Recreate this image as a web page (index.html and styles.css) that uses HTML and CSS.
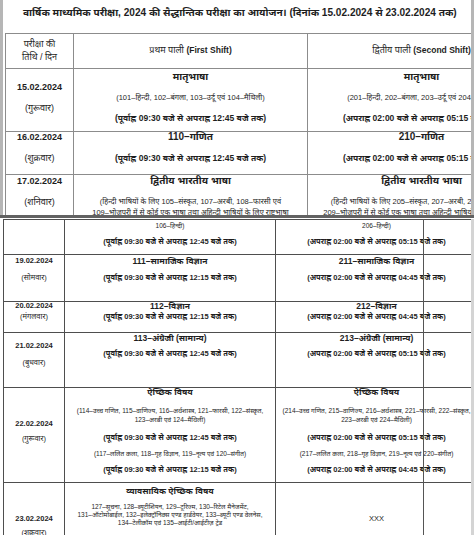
FILE: index.html
```html
<!DOCTYPE html>
<html lang="hi">
<head>
<meta charset="utf-8">
<link rel="stylesheet" href="styles.css">
</head>
<body>
<div class="top">
  <div class="strip"></div>
  <div class="top-main">
    <div class="title">वार्षिक माध्यमिक परीक्षा, 2024 की सैद्धान्तिक परीक्षा का आयोजन। (दिनांक 15.02.2024 से 23.02.2024 तक)</div>
    <table class="t1">
      <colgroup><col class="c1"><col class="c2"><col class="c3"></colgroup>
      <tr class="h-head">
        <td class="head1"><div>परीक्षा की</div><div>तिथि / दिन</div></td>
        <td class="head2">प्रथम पाली <span class="lat">(First Shift)</span></td>
        <td class="head2">द्वितीय पाली <span class="lat">(Second Shift)</span></td>
      </tr>
      <tr class="h-r15">
        <td class="date-cell r15d"><div class="date l20">15.02.2024</div><div class="day l22">(गुरूवार)</div></td>
        <td><div class="subj l16">मातृभाषा</div><div class="list l26">(101–हिन्दी, 102–बंगला, 103–उर्दू एवं 104–मैथिली)</div><div class="time l14">(पूर्वाह्न 09:30 बजे से अपराह्न 12:45 बजे तक)</div></td>
        <td><div class="subj l16">मातृभाषा</div><div class="list l26">(201–हिन्दी, 202–बंगला, 203–उर्दू एवं 204–मैथिली)</div><div class="time l14">(अपराह्न 02:00 बजे से अपराह्न 05:15 बजे तक)</div></td>
      </tr>
      <tr class="h-r16">
        <td class="date-cell"><div class="date l10">16.02.2024</div><div class="day l32">(शुक्रवार)</div></td>
        <td><div class="subj l10">110–गणित</div><div class="time l32">(पूर्वाह्न 09:30 बजे से अपराह्न 12:45 बजे तक)</div></td>
        <td><div class="subj l10">210–गणित</div><div class="time l32">(अपराह्न 02:00 बजे से अपराह्न 05:15 बजे तक)</div></td>
      </tr>
      <tr class="h-r17">
        <td class="date-cell"><div class="date l12">17.02.2024</div><div class="day l30">(शनिवार)</div></td>
        <td><div class="subj l12">द्वितीय भारतीय भाषा</div><div class="list para">(हिन्दी भाषियों के लिए 105–संस्कृत, 107–अरबी, 108–फारसी एवं<br>109–भोजपुरी में से कोई एक भाषा तथा अहिन्दी भाषियों के लिए राष्ट्रभाषा</div></td>
        <td><div class="subj l12">द्वितीय भारतीय भाषा</div><div class="list para">(हिन्दी भाषियों के लिए 205–संस्कृत, 207–अरबी, 208–फारसी एवं<br>209–भोजपुरी में से कोई एक भाषा तथा अहिन्दी भाषियों के लिए राष्ट्रभाषा</div></td>
      </tr>
    </table>
  </div>
  <div class="strip"></div>
</div>
<div class="band"></div>
<div class="bottom">
  <div class="gap"></div>
  <div class="bottom-main">
    <table class="t2">
      <colgroup><col class="d1"><col class="d2"><col class="d3"></colgroup>
      <tr class="b-r0">
        <td></td>
        <td><div class="list2 l12">106–हिन्दी)</div><div class="time2 l20">(पूर्वाह्न 09:30 बजे से अपराह्न 12:45 बजे तक)</div></td>
        <td><div class="list2 l12">206–हिन्दी)</div><div class="time2 l20">(अपराह्न 02:00 बजे से अपराह्न 05:15 बजे तक)</div></td>
      </tr>
      <tr class="b-r19">
        <td><div class="date2 l12">19.02.2024</div><div class="day2 l22">(सोमवार)</div></td>
        <td><div class="subj2 l12">111–सामाजिक विज्ञान</div><div class="time2 l22">(पूर्वाह्न 09:30 बजे से अपराह्न 12:15 बजे तक)</div></td>
        <td><div class="subj2 l12">211–सामाजिक विज्ञान</div><div class="time2 l22">(अपराह्न 02:00 बजे से अपराह्न 04:45 बजे तक)</div></td>
      </tr>
      <tr class="b-r20">
        <td><div class="date2 l8">20.02.2024</div><div class="day2 l14">(मंगलवार)</div></td>
        <td><div class="subj2 l8">112–विज्ञान</div><div class="time2 l14">(पूर्वाह्न 09:30 बजे से अपराह्न 12:15 बजे तक)</div></td>
        <td><div class="subj2 l8">212–विज्ञान</div><div class="time2 l14">(अपराह्न 02:00 बजे से अपराह्न 04:45 बजे तक)</div></td>
      </tr>
      <tr class="b-r21">
        <td class="pad5"><div class="date2 l16">21.02.2024</div><div class="day2 l18">(बुधवार)</div></td>
        <td><div class="subj2 l10">113–अंग्रेजी (सामान्य)</div><div class="time2 l22">(पूर्वाह्न 09:30 बजे से अपराह्न 12:45 बजे तक)</div></td>
        <td><div class="subj2 l10">213–अंग्रेजी (सामान्य)</div><div class="time2 l22">(अपराह्न 02:00 बजे से अपराह्न 05:15 बजे तक)</div></td>
      </tr>
      <tr class="b-r22">
        <td class="pad28"><div class="date2 l16">22.02.2024</div><div class="day2 l14">(गुरूवार)</div></td>
        <td><div class="subj2 l8">ऐच्छिक विषय</div><div class="list2 para2">(114–उच्च गणित, 115–वाणिज्य, 116–अर्थशास्त्र, 121–फारसी, 122–संस्कृत,<br>123–अरबी एवं 124–मैथिली)</div><div class="time2 l16 mt6">(पूर्वाह्न 09:30 बजे से अपराह्न 12:45 बजे तक)</div><div class="list2 l16">(117–ललित कला, 118–गृह विज्ञान, 119–नृत्य एवं 120–संगीत)</div><div class="time2 l16">(पूर्वाह्न 09:30 बजे से अपराह्न 12:15 बजे तक)</div></td>
        <td><div class="subj2 l8">ऐच्छिक विषय</div><div class="list2 para2">(214–उच्च गणित, 215–वाणिज्य, 216–अर्थशास्त्र, 221–फारसी, 222–संस्कृत,<br>223–अरबी एवं 224–मैथिली)</div><div class="time2 l16 mt6">(अपराह्न 02:00 बजे से अपराह्न 05:15 बजे तक)</div><div class="list2 l16">(217–ललित कला, 218–गृह विज्ञान, 219–नृत्य एवं 220–संगीत)</div><div class="time2 l16">(अपराह्न 02:00 बजे से अपराह्न 04:45 बजे तक)</div></td>
      </tr>
      <tr class="b-r23">
        <td class="pad29"><div class="date2 l14">23.02.2024</div><div class="day2 l14">(शुक्रवार)</div></td>
        <td><div class="subj2 l16">व्यावसायिक ऐच्छिक विषय</div><div class="list3 para3">127–सूचना, 128–ब्यूटीशियन, 129–टूरिज्म, 130–रिटेल मैनेजमेंट,<br>131–ऑटोमोबाईल, 132–इलेक्ट्रॉनिक्स एण्ड हार्डवेयर, 133–ब्यूटी एण्ड वेलनेस,<br>134–टेलीकॉम एवं 135–आईटी/आईटीज़ ट्रेड</div></td>
        <td class="pad29"><div class="xxx l14">XXX</div></td>
      </tr>
    </table>
    <div class="vline"></div>
  </div>
  <div class="strip light"></div>
</div>
</body>
</html>
```
FILE: styles.css
```css
body {
  margin: 0;
  width: 474px;
  height: 535px;
  overflow: hidden;
  background: #fff;
  color: #1e1e1e;
  font-family: "Liberation Sans", "Noto Sans Devanagari", "Lohit Devanagari", "Noto Sans", sans-serif;
}
.top {
  display: flex;
  height: 215px;
  overflow: hidden;
}
.strip {
  flex: none;
  width: 3px;
  background: #b6b6b6;
}
.strip.light { background: #d4d4d4; }
.top-main {
  flex: 1;
  min-width: 0;
  overflow: hidden;
}
.title {
  height: 33px;
  box-sizing: border-box;
  padding: 6px 0 0 20px;
  font-size: 10.1px;
  line-height: 14px;
  font-weight: bold;
  white-space: nowrap;
}
table {
  border-collapse: collapse;
  table-layout: fixed;
}
td {
  padding: 0;
  text-align: center;
  vertical-align: top;
  white-space: nowrap;
  overflow: visible;
}
.t1 { width: 530px; margin-left: 2px; }
.t1 td { border: 1px solid #8c8c8c; }
.c1 { width: 68px; }
.c2 { width: 234px; }
.c3 { width: 228px; }
.h-head { height: 35px; }
.h-r15 { height: 63px; }
.h-r16 { height: 42px; }
.h-r17 { height: 70px; }
.head1 {
  vertical-align: middle;
  font-size: 9px;
  line-height: 13px;
}
.head2 {
  vertical-align: middle;
  font-size: 9px;
}
.lat { font-weight: bold; font-size: 8.5px; }
.r15d { padding-top: 8px; }
.date { font-size: 9px; font-weight: bold; }
.day { font-size: 9px; }
.subj { font-size: 10px; font-weight: bold; }
.list { font-size: 7.5px; }
.time { font-size: 8.5px; font-weight: bold; }
.para { line-height: 11px; margin-top: 9px; }

.l8 { line-height: 8px; }
.l10 { line-height: 10px; }
.l12 { line-height: 12px; }
.l14 { line-height: 14px; }
.l16 { line-height: 16px; }
.l18 { line-height: 18px; }
.l20 { line-height: 20px; }
.l22 { line-height: 22px; }
.l26 { line-height: 26px; }
.l30 { line-height: 30px; }
.l32 { line-height: 32px; }
.mt6 { margin-top: 6px; }

.band {
  height: 3px;
  background: #626262;
}
.bottom {
  display: flex;
  height: 317px;
  overflow: hidden;
  padding-top: 1px;
  box-sizing: border-box;
}
.gap { flex: none; width: 3px; }
.bottom-main {
  position: relative;
  flex: 1;
  min-width: 0;
  overflow: hidden;
}
.t2 { width: 474px; }
.t2 td { border: 1px solid #4e4e4e; }
.d1 { width: 61px; }
.d2 { width: 211px; }
.d3 { width: 202px; }
.b-r0 { height: 35px; }
.b-r19 { height: 47px; }
.b-r20 { height: 31px; }
.b-r21 { height: 55px; }
.b-r22 { height: 95px; }
.b-r23 { height: 60px; }
.pad5 { padding-top: 5px !important; }
.pad28 { padding-top: 28px !important; }
.pad29 { padding-top: 29px !important; }
.date2 { font-size: 7.5px; font-weight: bold; }
.day2 { font-size: 7.5px; }
.subj2 { font-size: 8.5px; font-weight: bold; }
.time2 { font-size: 7.5px; font-weight: bold; }
.list2 { font-size: 6.5px; }
.list3 { font-size: 6.5px; }
.para2 { line-height: 9px; margin-top: 10px; }
.para3 { line-height: 8px; margin-top: 4px; }
.xxx { font-size: 7.5px; }
.vline {
  position: absolute;
  left: 420px;
  top: 0;
  bottom: 0;
  width: 1px;
  background: #555;
}
```
